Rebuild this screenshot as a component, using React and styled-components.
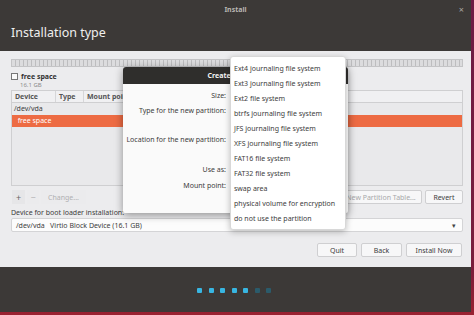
import React from 'react'
import styled, { createGlobalStyle } from 'styled-components'

const GlobalStyle = createGlobalStyle`
  html, body {
    margin: 0;
    padding: 0;
  }
  body {
    width: 474px;
    height: 315px;
    overflow: hidden;
    font-family: "Noto Sans", "Open Sans", sans-serif;
    background: linear-gradient(180deg, #6d1c45 0%, #7a1d3c 85%, #9a2231 100%);
  }
`

const fsTypes = [
    'Ext4 journaling file system',
    'Ext3 journaling file system',
    'Ext2 file system',
    'btrfs journaling file system',
    'JFS journaling file system',
    'XFS journaling file system',
    'FAT16 file system',
    'FAT32 file system',
    'swap area',
    'physical volume for encryption',
    'do not use the partition',
]

export default function App() {
    return (
        <>
            <GlobalStyle />
            <Desktop>
                <Window>
                    <TitleBar>
                        <span>Install</span>
                        <Close>×</Close>
                    </TitleBar>
                    <Header>Installation type</Header>

                    <Content>
                        <PartitionBar />
                        <FreeSpace>
                            <Check /> free space
                        </FreeSpace>
                        <Size>16.1 GB</Size>

                        <Table>
                            <HeadRow>
                                <HeadCell width={40}>Device</HeadCell>
                                <HeadCell width={24}>Type</HeadCell>
                                <HeadCell grow>Mount point</HeadCell>
                            </HeadRow>
                            <Row>/dev/vda</Row>
                            <Row selected>&nbsp;&nbsp;free space</Row>
                        </Table>

                        <ToolRow>
                            <Group>
                                <SmallButton width={13}>+</SmallButton>
                                <SmallButton width={12} disabled>−</SmallButton>
                                <SmallButton width={45} disabled>Change...</SmallButton>
                            </Group>
                            <Group>
                                <Button width={82} disabled>New Partition Table...</Button>
                                <Button width={38}>Revert</Button>
                            </Group>
                        </ToolRow>

                        <FieldLabel>Device for boot loader installation:</FieldLabel>
                        <Combo>
                            <span>/dev/vda&nbsp;&nbsp;&nbsp;Virtio Block Device (16.1 GB)</span>
                            <Arrow>▾</Arrow>
                        </Combo>

                        <Actions>
                            <Button width={40}>Quit</Button>
                            <Button width={41}>Back</Button>
                            <Button width={56}>Install Now</Button>
                        </Actions>
                    </Content>

                    <Footer>
                        {[1, 1, 1, 1, 1, 0, 0].map((on, i) => (
                            <Dot key={i} on={on} />
                        ))}
                    </Footer>

                    <Dialog>
                        <DialogTitle>Create partition</DialogTitle>
                        <DialogBody>
                            <DialogLabel top={7}>Size:</DialogLabel>
                            <DialogLabel top={5}>Type for the new partition:</DialogLabel>
                            <DialogLabel top={19}>Location for the new partition:</DialogLabel>
                            <DialogLabel top={20}>Use as:</DialogLabel>
                            <DialogLabel top={6}>Mount point:</DialogLabel>
                        </DialogBody>
                    </Dialog>

                    <Menu>
                        {fsTypes.map(t => (
                            <MenuItem key={t}>{t}</MenuItem>
                        ))}
                    </Menu>
                </Window>
            </Desktop>
        </>
    )
}

const Desktop = styled.div`
    width: 474px;
    height: 315px;
`

const Window = styled.div`
    position: relative;
    width: 471px;
    height: 312px;
    display: flex;
    flex-direction: column;
    background: #3c3937;
    overflow: hidden;
`

const TitleBar = styled.div`
    height: 18px;
    display: flex;
    align-items: center;
    justify-content: center;
    position: relative;
    color: #b9b6b2;
    font-size: 7px;
    font-weight: bold;
`

const Close = styled.span`
    position: absolute;
    right: 7px;
    top: 3px;
    font-size: 9px;
    font-weight: normal;
    color: #a9a6a2;
`

const Header = styled.div`
    height: 33px;
    box-sizing: border-box;
    padding: 6px 0 0 11px;
    color: #f0efee;
    font-size: 12.5px;
`

const Content = styled.div`
    height: 216px;
    box-sizing: border-box;
    padding: 8px 8px 0 11px;
    background: #ececee;
    display: flex;
    flex-direction: column;
    color: #3c3c3c;
    font-size: 7px;
`

const PartitionBar = styled.div`
    height: 8px;
    box-sizing: border-box;
    border: 1px solid #c4c4c6;
    background: repeating-linear-gradient(90deg, #dcdcde 0, #dcdcde 3px, #bdbdbf 3px, #bdbdbf 4px);
`

const FreeSpace = styled.div`
    margin-top: 5px;
    height: 9px;
    line-height: 9px;
    display: flex;
    align-items: center;
    gap: 3px;
    font-weight: bold;
    color: #333;
`

const Check = styled.span`
    width: 5px;
    height: 5px;
    border: 1px solid #777;
    background: #fafafa;
`

const Size = styled.div`
    height: 8px;
    line-height: 8px;
    padding-left: 9px;
    font-size: 6px;
    color: #8c8c8c;
`

const Table = styled.div`
    margin-top: 1px;
    height: 96px;
    box-sizing: border-box;
    border: 1px solid #cfcfd1;
    background: #e9e9eb;
    display: flex;
    flex-direction: column;
`

const HeadRow = styled.div`
    height: 11px;
    display: flex;
    background: #f0f0f2;
    border-bottom: 1px solid #cfcfd1;
`

const HeadCell = styled.div`
    width: ${p => (p.grow ? 'auto' : `${p.width}px`)};
    flex: ${p => (p.grow ? 1 : 'none')};
    padding-left: 3px;
    line-height: 11px;
    border-right: ${p => (p.grow ? 'none' : '1px solid #d6d6d8')};
    color: #555;
    font-weight: bold;
`

const Row = styled.div`
    height: 12px;
    line-height: 12px;
    padding-left: 2px;
    background: ${p => (p.selected ? '#ed6b43' : 'transparent')};
    color: ${p => (p.selected ? '#fff' : '#3c3c3c')};
`

const ToolRow = styled.div`
    margin-top: 4px;
    height: 14px;
    display: flex;
    justify-content: space-between;
`

const Group = styled.div`
    display: flex;
    gap: 3px;
    &:first-child {
        gap: 2px;
        padding-left: 1px;
    }
`

const SmallButton = styled.div`
    width: ${p => p.width}px;
    height: 14px;
    display: flex;
    align-items: center;
    justify-content: center;
    background: ${p => (p.disabled ? '#ebebed' : '#e6e6e8')};
    color: ${p => (p.disabled ? '#b0b0b2' : '#666')};
    font-size: ${p => (p.width < 20 ? 9 : 7)}px;
`

const Button = styled.div`
    width: ${p => p.width}px;
    height: 14px;
    box-sizing: border-box;
    display: flex;
    align-items: center;
    justify-content: center;
    border: 1px solid #cfcfd1;
    border-radius: 2px;
    background: #f7f7f8;
    color: ${p => (p.disabled ? '#a8a8aa' : '#3c3c3c')};
    white-space: nowrap;
`

const FieldLabel = styled.div`
    margin-top: 4px;
    height: 9px;
    line-height: 9px;
    color: #3c3c3c;
`

const Combo = styled.div`
    margin-top: 1px;
    height: 14px;
    box-sizing: border-box;
    border: 1px solid #d4d4d6;
    border-radius: 2px;
    background: #fcfcfc;
    display: flex;
    align-items: center;
    justify-content: space-between;
    padding: 0 6px 0 4px;
`

const Arrow = styled.span`
    font-size: 7px;
    color: #444;
`

const Actions = styled.div`
    margin-top: 11px;
    display: flex;
    justify-content: flex-end;
    gap: 4px;
    padding-right: 1px;
`

const Footer = styled.div`
    flex: 1;
    display: flex;
    justify-content: center;
    align-items: flex-start;
    padding-top: 21px;
    padding-right: 3px;
    gap: 6.5px;
`

const Dot = styled.div`
    width: 5px;
    height: 5px;
    border-radius: 1px;
    background: ${p => (p.on ? '#38b6e2' : '#2b5b6b')};
`

const Dialog = styled.div`
    position: absolute;
    left: 123px;
    top: 67px;
    width: 225px;
    height: 146px;
    background: #fafafa;
    border-radius: 3px 3px 2px 2px;
    box-shadow: 0 2px 8px rgba(0, 0, 0, 0.4);
    overflow: hidden;
    display: flex;
    flex-direction: column;
`

const DialogTitle = styled.div`
    height: 17px;
    background: #2f2e2c;
    color: #f4f4f4;
    font-size: 7px;
    font-weight: bold;
    display: flex;
    align-items: center;
    justify-content: center;
`

const DialogBody = styled.div`
    display: flex;
    flex-direction: column;
    width: 103px;
    font-size: 7px;
    color: #3c3c3c;
`

const DialogLabel = styled.div`
    margin-top: ${p => p.top}px;
    height: 10px;
    line-height: 10px;
    text-align: right;
    white-space: nowrap;
`

const Menu = styled.div`
    position: absolute;
    left: 230px;
    top: 56px;
    width: 116px;
    height: 174px;
    box-sizing: border-box;
    padding-top: 4px;
    background: #ffffff;
    border: 1px solid #d8d8d8;
    border-radius: 3px;
    box-shadow: 0 2px 6px rgba(0, 0, 0, 0.25);
`

const MenuItem = styled.div`
    height: 15px;
    line-height: 15px;
    padding-left: 3px;
    font-size: 7px;
    color: #3c3c3c;
    white-space: nowrap;
`
